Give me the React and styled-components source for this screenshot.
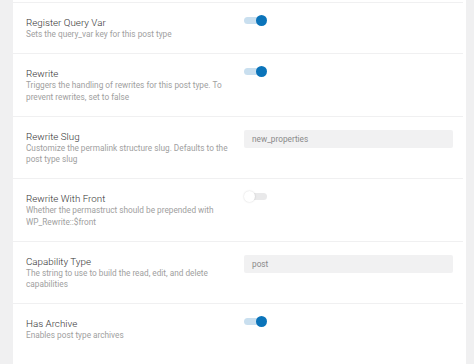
import React from "react";
import styled, { createGlobalStyle } from "styled-components";

const GlobalStyle = createGlobalStyle`
    html, body {
        margin: 0;
        padding: 0;
        background: #f0f0f1;
    }
    body {
        font-family: Roboto, "Liberation Sans", Arial, sans-serif;
    }
`;

const fields = [
    {
        title: "Register Query Var",
        desc: "Sets the query_var key for this post type",
        type: "toggle",
        on: true,
    },
    {
        title: "Rewrite",
        desc: "Triggers the handling of rewrites for this post type. To prevent rewrites, set to false",
        type: "toggle",
        on: true,
    },
    {
        title: "Rewrite Slug",
        desc: "Customize the permalink structure slug. Defaults to the post type slug",
        type: "input",
        value: "new_properties",
    },
    {
        title: "Rewrite With Front",
        desc: "Whether the permastruct should be prepended with WP_Rewrite::$front",
        type: "toggle",
        on: false,
    },
    {
        title: "Capability Type",
        desc: "The string to use to build the read, edit, and delete capabilities",
        type: "input",
        value: "post",
    },
    {
        title: "Has Archive",
        desc: "Enables post type archives",
        type: "toggle",
        on: true,
    },
];

const App = () => {
    return (
        <Page>
            <GlobalStyle />
            <Panel>
                {fields.map((f) => (
                    <Row key={f.title}>
                        <Label>
                            <Title>{f.title}</Title>
                            <Desc>{f.desc}</Desc>
                        </Label>
                        <Control>
                            {f.type === "toggle" ? (
                                <Toggle $on={f.on}>
                                    <span className="track" />
                                    <span className="knob" />
                                </Toggle>
                            ) : (
                                <TextInput>{f.value}</TextInput>
                            )}
                        </Control>
                    </Row>
                ))}
            </Panel>
        </Page>
    );
};

const Page = styled.div`
    width: 474px;
    height: 364px;
    overflow: hidden;
    padding-left: 13px;
    padding-right: 8px;
    box-sizing: border-box;
    background: #f0f0f1;
`;

const Panel = styled.div`
    background: #fff;
    padding: 2px 3px 0 0;
    height: 100%;
    box-sizing: border-box;
`;

const Row = styled.div`
    display: grid;
    grid-template-columns: 204px 1fr;
    column-gap: 14px;
    padding: 13px 10px 12.5px 13px;
    border-top: 1px solid #f0f0f1;
`;

const Label = styled.div`
    display: flex;
    flex-direction: column;
`;

const Title = styled.div`
    font-size: 9.8px;
    font-weight: 300;
    line-height: 13px;
    color: #333;
`;

const Desc = styled.div`
    font-size: 8.25px;
    line-height: 11.5px;
    color: #a0a0a0;
`;

const Control = styled.div`
    display: flex;
    align-items: flex-start;
`;

const Toggle = styled.div`
    position: relative;
    width: 23px;
    height: 11px;
    margin-top: -1px;

    & > .track {
        position: absolute;
        left: ${(p) => (p.$on ? "0" : "6px")};
        top: 2px;
        width: 17px;
        height: 7px;
        border-radius: 4px;
        background: ${(p) => (p.$on ? "#c9dfef" : "#e9e9ea")};
    }

    & > .knob {
        position: absolute;
        top: 0;
        left: ${(p) => (p.$on ? "12px" : "0")};
        width: 11px;
        height: 11px;
        border-radius: 50%;
        background: ${(p) => (p.$on ? "#0b74ba" : "#fff")};
        box-shadow: ${(p) =>
            p.$on ? "none" : "0 0 2px rgba(0, 0, 0, 0.18)"};
    }
`;

const TextInput = styled.div`
    width: 100%;
    height: 18px;
    background: #f1f1f2;
    border-radius: 2px;
    box-sizing: border-box;
    padding: 0 8px;
    font-size: 8.25px;
    line-height: 18px;
    color: #8a8a8a;
`;

export default App;
